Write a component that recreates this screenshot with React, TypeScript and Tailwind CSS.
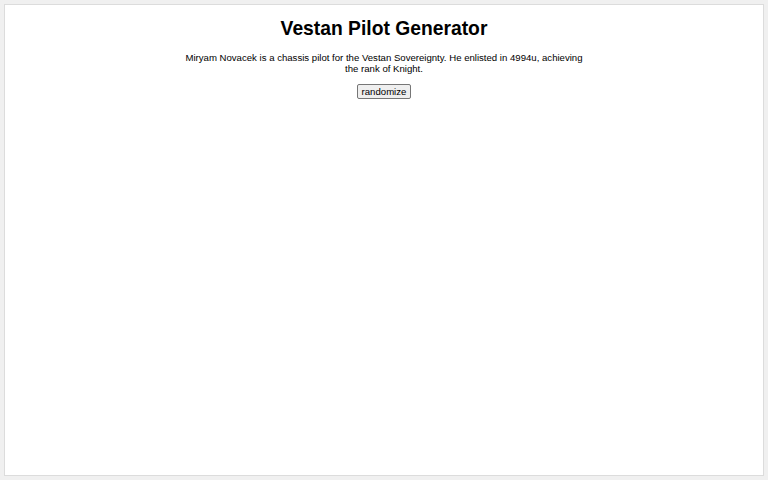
import React, { useState } from 'react';

const names = ['Miryam Novacek', 'Tomas Kell', 'Ilse Varga', 'Doran Pike'];
const ranks = ['Knight', 'Squire', 'Baron', 'Marshal'];

const App = () => {
  const [pilot, setPilot] = useState({ name: 'Miryam Novacek', year: 4994, rank: 'Knight' });

  const randomize = () => {
    setPilot({
      name: names[Math.floor(Math.random() * names.length)],
      year: 4950 + Math.floor(Math.random() * 60),
      rank: ranks[Math.floor(Math.random() * ranks.length)],
    });
  };

  return (
    <div className="h-[480px] bg-[#f0f0f0] p-1 font-['Liberation_Sans',Arial,sans-serif]">
      <div className="h-full bg-white border border-[#dcdcdc] flex flex-col items-center text-black">
        <h1 className="mt-[12px] text-[19.3px] font-bold leading-[24px]">Vestan Pilot Generator</h1>
        <p className="mt-[11px] w-[410px] text-center text-[9.6px] leading-[11px]">
          {pilot.name} is a chassis pilot for the Vestan Sovereignty. He enlisted in {pilot.year}u, achieving the rank of {pilot.rank}.
        </p>
        <button
          onClick={randomize}
          className="mt-[10px] px-[4px] h-[15px] text-[9.6px] leading-[13px] bg-[#efefef] border border-[#767676] rounded-[2px]"
        >
          randomize
        </button>
      </div>
    </div>
  );
};

export default App;
